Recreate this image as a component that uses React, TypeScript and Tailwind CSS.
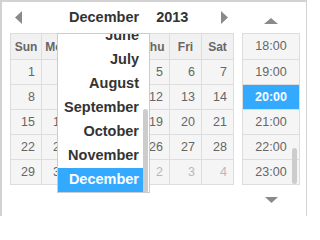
import React from 'react';

// only the tail of the list is scrolled into view
const months = ['June', 'July', 'August', 'September', 'October', 'November', 'December'];

const dayNames = ['Sun', 'Mon', 'Tue', 'Wed', 'Thu', 'Fri', 'Sat'];

const weeks: { d: number; other?: boolean }[][] = [
  [1, 2, 3, 4, 5, 6, 7].map((d) => ({ d })),
  [8, 9, 10, 11, 12, 13, 14].map((d) => ({ d })),
  [15, 16, 17, 18, 19, 20, 21].map((d) => ({ d })),
  [22, 23, 24, 25, 26, 27, 28].map((d) => ({ d })),
  [
    { d: 29 }, { d: 30 }, { d: 31 },
    { d: 1, other: true }, { d: 2, other: true }, { d: 3, other: true }, { d: 4, other: true },
  ],
];

const times = ['18:00', '19:00', '20:00', '21:00', '22:00', '23:00'];

const Arrow = ({ dir }: { dir: 'left' | 'right' | 'up' | 'down' }) => {
  if (dir === 'left')
    return (
      <svg width="7" height="13" viewBox="0 0 7 13">
        <polygon points="7,0 0,6.5 7,13" fill="#8a8a8a" />
      </svg>
    );
  if (dir === 'right')
    return (
      <svg width="7" height="13" viewBox="0 0 7 13">
        <polygon points="0,0 7,6.5 0,13" fill="#8a8a8a" />
      </svg>
    );
  if (dir === 'up')
    return (
      <svg width="14" height="6" viewBox="0 0 14 6">
        <polygon points="0,6 7,0 14,6" fill="#8a8a8a" />
      </svg>
    );
  return (
    <svg width="13" height="6" viewBox="0 0 13 6">
      <polygon points="0,0 13,0 6.5,6" fill="#8a8a8a" />
    </svg>
  );
};

export default function App() {
  return (
    <div className="w-[310px] h-[216px] bg-white overflow-hidden font-['Liberation_Sans',Arial,sans-serif]">
      <div className="w-[307px] h-[240px] border-l-2 border-t-2 border-r border-[#d2d2d2] flex pl-[8px]">
        {/* calendar */}
        <div className="relative w-[224px]">
          <div className="h-[31px] flex items-center text-[14.5px] font-bold text-[#333]">
            <span className="ml-[5px] flex"><Arrow dir="left" /></span>
            <span className="ml-[47px]">December</span>
            <span className="ml-[17px]">2013</span>
            <span className="ml-auto mr-[6px] flex"><Arrow dir="right" /></span>
          </div>

          <div className="grid grid-cols-[31px_repeat(6,32px)] border-l border-t border-[#ddd]">
            {dayNames.map((n) => (
              <div
                key={n}
                className="h-[26px] border-r border-b border-[#ddd] bg-[#f1f1f1] flex items-center justify-center text-[12px] font-bold text-[#666]"
              >
                {n}
              </div>
            ))}
            {weeks.flat().map((c, i) => (
              <div
                key={i}
                className={`h-[25px] border-r border-b border-[#ddd] bg-[#f5f5f5] flex items-center justify-end pr-[6px] text-[12.5px] ${
                  c.other ? 'text-[#b8b8b8]' : 'text-[#666]'
                }`}
              >
                {c.d}
              </div>
            ))}
          </div>

          {/* month dropdown */}
          <div className="absolute left-[47px] top-[31px] w-[93px] h-[160px] bg-white border border-[#ccc] overflow-hidden flex flex-col justify-end">
            {months.map((m) => (
              <div
                key={m}
                className={`shrink-0 h-[24px] mr-[6px] pr-[4px] flex items-center justify-end text-[14.5px] font-bold ${
                  m === 'December' ? 'bg-[#33aaff] text-white' : 'text-[#333]'
                }`}
              >
                {m}
              </div>
            ))}
            <div className="absolute right-[1px] top-[75px] w-[5px] h-[84px] rounded-[3px] bg-[#cccccc]" />
          </div>
        </div>

        {/* time picker */}
        <div className="ml-[8px] w-[58px] flex flex-col items-center">
          <div className="h-[31px] pt-[16px] flex">
            <Arrow dir="up" />
          </div>
          <div className="relative w-[58px] border-t border-x border-[#ddd]">
            {times.map((t, i) => (
              <div
                key={t}
                className={`${i === 0 ? 'h-[26px]' : 'h-[25px]'} border-b border-[#ddd] flex items-center justify-center text-[12.5px] ${
                  t === '20:00' ? 'bg-[#33aaff] text-white font-bold' : 'bg-[#f5f5f5] text-[#666]'
                }`}
              >
                {t}
              </div>
            ))}
            <div className="absolute right-[2px] top-[114px] w-[5px] h-[36px] rounded-[3px] bg-[#cccccc]" />
          </div>
          <div className="mt-[12px] flex">
            <Arrow dir="down" />
          </div>
        </div>
      </div>
    </div>
  );
}
